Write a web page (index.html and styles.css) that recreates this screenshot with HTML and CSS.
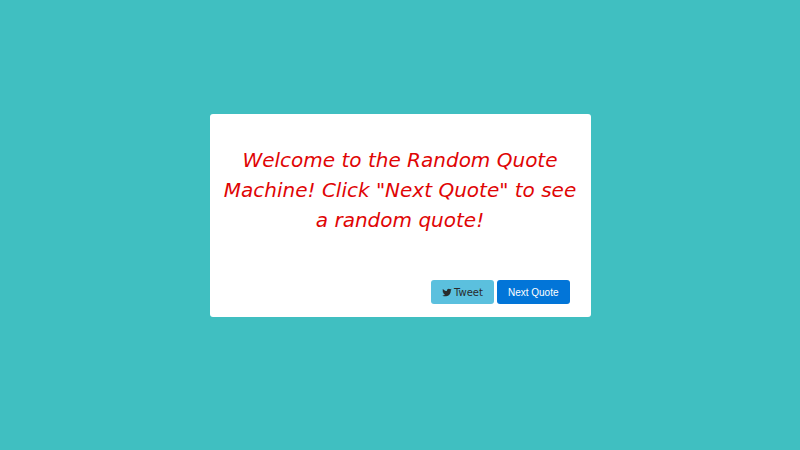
FILE: index.html
```html
<!DOCTYPE html>
<html lang="en">
<head>
    <meta charset="UTF-8">
    <meta name="viewport" content="width=device-width, initial-scale=1">
    <title>Random Quote Machine</title>
    <link rel="stylesheet" href="styles.css">
</head>
<body>
    <div class="quote-box">
        <p class="quote-text">Welcome to the Random Quote Machine! Click "Next Quote" to see a random quote!</p>
        <div class="buttons">
            <a href="https://twitter.com/intent/tweet" class="btn btn-tweet">
                <svg class="icon" viewBox="0 0 1664 1792" aria-hidden="true"><path d="M1620 408q-67 98-162 167 1 14 1 42 0 130-38 259.500t-115.500 248.500-184.500 210.500-258 146-323 54.500q-271 0-496-145 35 4 78 4 225 0 401-138-105-2-188-64.500t-114-159.500q33 5 61 5 43 0 85-11-112-23-185.500-111.500t-73.500-205.500v-4q68 38 146 41-66-44-105-115t-39-154q0-88 44-163 121 149 294.500 238.500t371.500 99.500q-8-38-8-74 0-134 94.500-228.500t228.500-94.500q140 0 236 102 109-21 205-78-37 115-142 178 93-10 186-50z"/></svg>
                Tweet
            </a>
            <button type="button" class="btn btn-next">Next Quote</button>
        </div>
    </div>
</body>
</html>
```

FILE: styles.css
```css
* { box-sizing: border-box; }

body {
    margin: 0;
    min-height: 100vh;
    padding: 114px 16px 16px;
    background-color: #40bfc1;
    font-family: "DejaVu Sans", sans-serif;
}

.quote-box {
    max-width: 381px;
    margin: 0 auto;
    padding: 31px 12px 13px;
    background-color: #fff;
    border-radius: 3px;
}

.quote-text {
    margin: 0;
    color: #e00505;
    font-size: 20px;
    font-style: italic;
    line-height: 30px;
    text-align: center;
}

.buttons {
    display: flex;
    justify-content: flex-end;
    gap: 3px;
    margin: 45px 9px 0 0;
}

.btn {
    display: inline-flex;
    align-items: center;
    height: 24px;
    padding: 0 10px;
    border: 1px solid transparent;
    border-radius: 3px;
    font-size: 10px;
    line-height: 15px;
    text-decoration: none;
    cursor: pointer;
}

.btn-tweet {
    gap: 3px;
    background-color: #5bc0de;
    color: #292b2c;
}

.btn-next {
    background-color: #0275d8;
    color: #fff;
    font-family: "Liberation Sans", Arial, sans-serif;
}

.btn-tweet:hover { background-color: #31b0d5; }
.btn-next:hover { background-color: #025aa5; }

.icon {
    width: 10px;
    height: 11px;
    margin-right: -1px;
    fill: currentColor;
}
```
